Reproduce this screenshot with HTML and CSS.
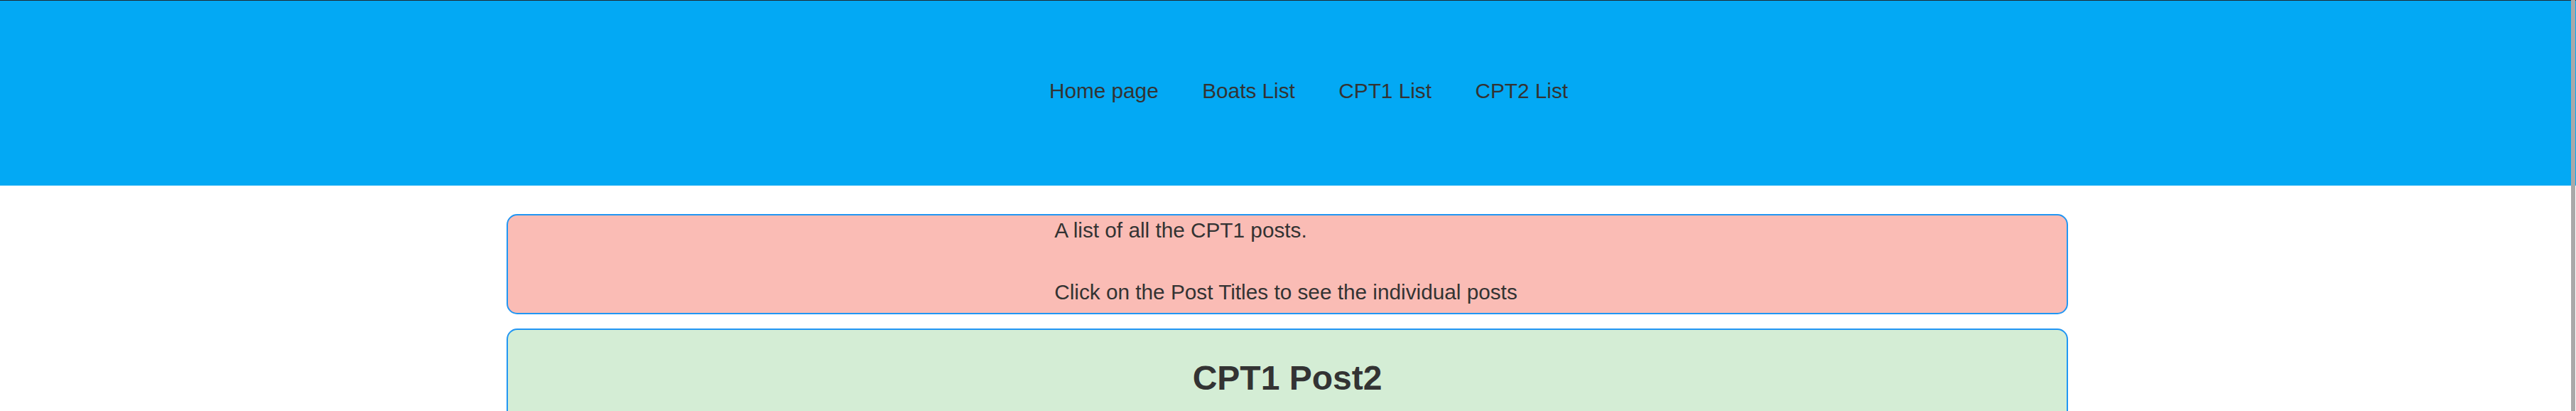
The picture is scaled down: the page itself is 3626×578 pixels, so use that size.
FILE: index.html
```html
<!DOCTYPE html>
<html lang="en">
<head>
<meta charset="utf-8">
<title>CPT1 List</title>
<link rel="stylesheet" href="styles.css">
</head>
<body>
<header class="site-header">
  <nav class="main-nav">
    <a class="nav-link" href="#">Home page</a>
    <a class="nav-link" href="#">Boats List</a>
    <a class="nav-link" href="#">CPT1 List</a>
    <a class="nav-link" href="#">CPT2 List</a>
  </nav>
</header>
<main class="content">
  <section class="box box-intro">
    <div class="intro-text">
      <p class="intro-line">A list of all the CPT1 posts.</p>
      <p class="intro-line intro-line-second">Click on the Post Titles to see the individual posts</p>
    </div>
  </section>
  <article class="box box-post">
    <h3 class="post-title">CPT1 Post2</h3>
  </article>
</main>
<div class="scroll-thumb"></div>
</body>
</html>
```
FILE: styles.css
```css
html, body {
  margin: 0;
  padding: 0;
  overflow: hidden;
  background: #ffffff;
}

body {
  font-family: "Liberation Sans", Arial, Helvetica, sans-serif;
  font-size: 29.75px;
  line-height: 42.5px;
  color: #333333;
}

.site-header {
  border-top: 1px solid #1f2a30;
  background: #03a9f4;
  height: 261px;
  box-sizing: border-box;
  padding-top: 106px;
}

.main-nav {
  display: flex;
  justify-content: center;
  gap: 61.5px;
  padding-left: 58px;
}

.nav-link {
  color: #333333;
  text-decoration: none;
}

.content {
  padding-top: 40px;
  display: flex;
  flex-direction: column;
  align-items: center;
  gap: 20px;
  padding-right: 2px;
}

.box {
  width: 2198px;
  box-sizing: border-box;
  border: 2px solid #2196f3;
  border-radius: 15px;
}

.box-intro {
  background: #fabcb5;
  padding-bottom: 7.5px;
}

.intro-text {
  width: fit-content;
  margin: 0 auto;
  padding-right: 4px;
}

.intro-line {
  margin: 0;
}

.intro-line-second {
  margin-top: 44.5px;
}

.box-post {
  background: #d4edd5;
  height: 200px;
}

.post-title {
  margin: 41.8px 0 0;
  text-align: center;
  font-size: 48px;
  font-weight: bold;
  line-height: 1.1;
}

.scroll-thumb {
  position: fixed;
  top: 0;
  bottom: 0;
  right: 1px;
  width: 6px;
  background: #a9a9a9;
}
```
